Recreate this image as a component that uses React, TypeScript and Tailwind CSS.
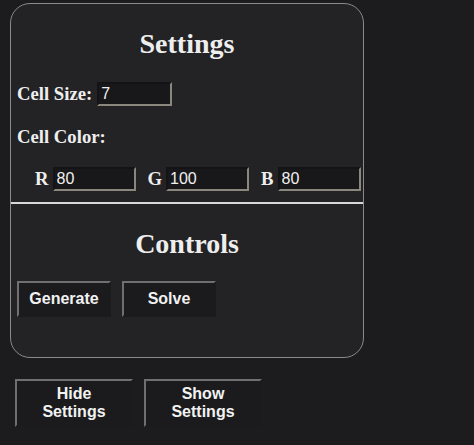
import React, { useState } from "react";

const serif = { fontFamily: '"Liberation Serif", "Times New Roman", serif' };
const sans = { fontFamily: '"Liberation Sans", Arial, sans-serif' };

const inputCls =
  "h-[24px] bg-[#18181a] text-[#f0f0f0] text-[16px] pl-[2px] outline-none border-2 border-t-[#141416] border-l-[#141416] border-b-[#8a877c] border-r-[#8a877c]";

const btnCls =
  "bg-[#1b1b1d] text-[#f2f2f2] font-bold text-[16px] leading-[18px] border-2 border-t-[#6f6f6f] border-l-[#6f6f6f] border-b-[#1b1b1d] border-r-[#1b1b1d]";

const App: React.FC = () => {
  const [size, setSize] = useState("7");
  const [rgb, setRgb] = useState({ R: "80", G: "100", B: "80" });
  const [show, setShow] = useState(true);

  return (
    <div className="w-[474px] h-[445px] bg-[#1c1c1e] text-[#eeeeee] overflow-hidden" style={serif}>
      <div className="h-[376px] pt-[3px] pl-[10px]">
        {show && (
          <div className="w-[354px] h-[355px] rounded-[20px] border border-[#8a8a8a] bg-[#232325] overflow-hidden">
            {/* SETTINGS */}
            <h2 className="text-center font-bold text-[28px] leading-[32px] mt-[24px]">Settings</h2>

            <div className="flex items-center mt-[20px] pl-[6px]">
              <label className="font-bold text-[18.7px] mr-[5px]">Cell Size:</label>
              <input
                value={size}
                onChange={(e) => setSize(e.target.value)}
                className={`${inputCls} w-[75px] h-[23px]`}
                style={sans}
              />
            </div>

            <div className="font-bold text-[18.7px] mt-[18px] pl-[6px] leading-[22px]">Cell Color:</div>

            <div className="flex items-center mt-[17px] pl-[24px]">
              {(["R", "G", "B"] as const).map((k, i) => (
                <div key={k} className={`flex items-center ${i > 0 ? "ml-[12px]" : ""}`}>
                  <span className="font-bold text-[18.7px] mr-[4px]">{k}</span>
                  <input
                    value={rgb[k]}
                    onChange={(e) => setRgb({ ...rgb, [k]: e.target.value })}
                    className={`${inputCls} w-[83px]`}
                    style={sans}
                  />
                </div>
              ))}
            </div>

            <div className="mt-[9px] h-[2px] bg-[#d8d8d8]" />

            {/* CONTROLS */}
            <h2 className="text-center font-bold text-[28px] leading-[32px] mt-[24px]">Controls</h2>

            <div className="flex gap-[11px] mt-[21px] pl-[6px]" style={sans}>
              <button className={`${btnCls} w-[94px] h-[36px]`}>Generate</button>
              <button className={`${btnCls} w-[94px] h-[36px]`}>Solve</button>
            </div>
          </div>
        )}
      </div>

      <div className="flex gap-[11px] pl-[15px] mt-[3px]" style={sans}>
        <button onClick={() => setShow(false)} className={`${btnCls} w-[118px] h-[48px]`}>
          Hide
          <br />
          Settings
        </button>
        <button onClick={() => setShow(true)} className={`${btnCls} w-[118px] h-[48px]`}>
          Show
          <br />
          Settings
        </button>
      </div>
    </div>
  );
};

export default App;
